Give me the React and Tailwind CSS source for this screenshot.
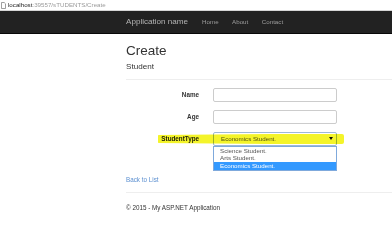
import React from "react";

const font = { fontFamily: '"Liberation Sans", Arial, sans-serif' };

export default function App() {
  return (
    <div className="w-[392px] h-[234px] overflow-hidden bg-white relative text-[#333]" style={font}>
      {/* address bar */}
      <div className="h-[11px] flex items-center pl-[1px] gap-[2px] border-b border-[#d6d6d6] bg-white">
        <svg width="5" height="7" viewBox="0 0 5 7" className="shrink-0">
          <path d="M0.5 0.5 H3.2 L4.5 1.8 V6.5 H0.5 Z" fill="#fff" stroke="#777" strokeWidth="0.7" />
        </svg>
        <span className="text-[6.2px] leading-none text-[#222]">
          localhost<span className="text-[#9a9a9a]">:39557/sTUDENTS/Create</span>
        </span>
      </div>

      {/* navbar */}
      <div className="h-[23px] bg-[#222] border-b border-[#080808] flex items-center pl-[126px]">
        <span className="text-[8.1px] leading-none text-[#b4b4b4]">Application name</span>
        <span className="ml-[14px] text-[6.2px] leading-none text-[#9d9d9d]">Home</span>
        <span className="ml-[13.5px] text-[6.2px] leading-none text-[#9d9d9d]">About</span>
        <span className="ml-[13.5px] text-[6.2px] leading-none text-[#9d9d9d]">Contact</span>
      </div>

      {/* body */}
      <div className="pl-[126px] flex flex-col">
        <h2 className="mt-[9px] text-[13.5px] leading-[15px] text-[#333]">Create</h2>
        <h4 className="mt-[3.5px] text-[8.1px] leading-[9px] text-[#333]">Student</h4>
        <div className="mt-[8px] border-t border-[#eee]" />

        <div className="mt-[8px] flex flex-col gap-[7.5px] relative">
          <div className="flex items-center h-[14.5px]">
            <label className="w-[73px] text-right font-bold text-[6.3px] leading-none text-[#333]">Name</label>
            <div className="ml-[14px] w-[124px] h-full border border-[#ccc] rounded-[2px] bg-white" />
          </div>
          <div className="flex items-center h-[14.5px]">
            <label className="w-[73px] text-right font-bold text-[6.3px] leading-none text-[#333]">Age</label>
            <div className="ml-[14px] w-[124px] h-full border border-[#ccc] rounded-[2px] bg-white" />
          </div>
          <div className="flex items-center h-[14.5px] relative">
            <label className="w-[73px] text-right font-bold text-[6.3px] leading-none text-[#222]">StudentType</label>
            <div className="ml-[14px] w-[124px] h-full border border-[#9fb9d8] rounded-[2px] bg-white flex items-center pl-[7px] pr-[3px] relative">
              <span className="text-[6.2px] leading-none text-[#555] flex-1">Economics Student.</span>
              <svg width="4" height="3" viewBox="0 0 4 3">
                <path d="M0 0 H4 L2 3 Z" fill="#111" />
              </svg>
              {/* dropdown list */}
              <div className="absolute left-[-1px] top-[13.5px] w-[124px] bg-white border border-[#7fa9dc] flex flex-col z-10">
                <div className="h-[7.7px] flex items-center pl-[6px] text-[6.2px] leading-none text-[#555]">Science Student.</div>
                <div className="h-[7.7px] flex items-center pl-[6px] text-[6.2px] leading-none text-[#555]">Arts Student.</div>
                <div className="h-[7.7px] flex items-center pl-[6px] text-[6.2px] leading-none text-white bg-[#3399ff]">Economics Student.</div>
              </div>
            </div>
            {/* highlighter annotation */}
            <div
              className="absolute left-[32px] top-[2.5px] w-[186px] h-[10px] bg-[#f4f42a] mix-blend-multiply rounded-[2px] z-20 pointer-events-none"
              style={{ clipPath: "polygon(0 10%, 60% 0, 100% 0, 100% 100%, 60% 100%, 0 90%)" }}
            />
          </div>
        </div>

        <div className="mt-[28.8px] text-[6.3px] leading-[9px] text-[#5b8fd0]">Back to List</div>
        <div className="mt-[8px] border-t border-[#eee]" />
        <div className="mt-[10px] text-[6.3px] leading-[9px] text-[#333]">© 2015 - My ASP.NET Application</div>
      </div>
    </div>
  );
}
